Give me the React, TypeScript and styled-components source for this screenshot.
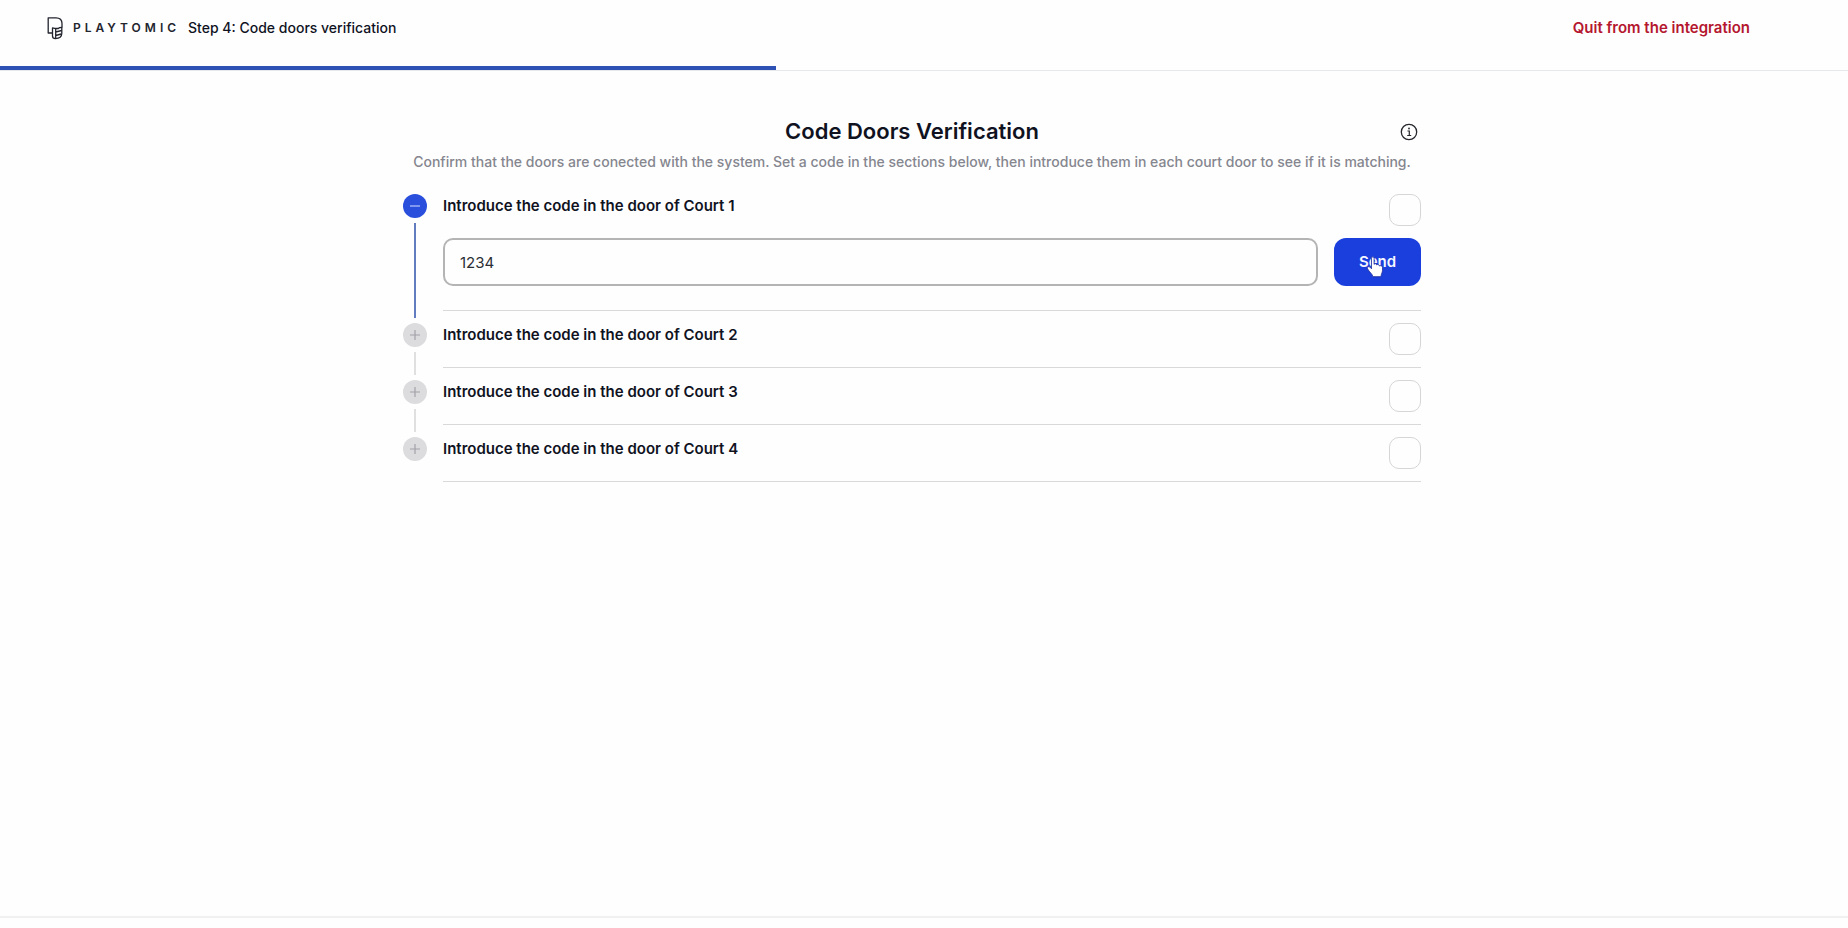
import React, { useState } from "react";
import styled, { createGlobalStyle } from "styled-components";

const GlobalStyle = createGlobalStyle`
  *, *::before, *::after { box-sizing: border-box; }
  body {
    margin: 0;
    background: #fefefe;
    color: #10131f;
    font-family: Inter, "Liberation Sans", sans-serif;
    font-size: 15px;
    line-height: 24px;
  }
`;

const Page = styled.div`
  display: flex;
  flex-direction: column;
  min-height: 100vh;
`;

const Header = styled.header`
  border-bottom: 1px solid #e6e8e9;
`;

const HeaderRow = styled.div`
  display: flex;
  align-items: center;
  height: 66px;
  padding: 0 98px 10px 47px;
`;

const Brand = styled.a`
  display: flex;
  align-items: center;
  gap: 9px;
  color: #23252e;
  text-decoration: none;
`;

const Wordmark = styled.span`
  font-size: 12px;
  font-weight: 600;
  letter-spacing: 4px;
`;

const StepName = styled.span`
  margin-left: 8px;
  font-size: 14px;
  font-weight: 500;
`;

const QuitLink = styled.a`
  margin-left: auto;
  color: #b5172f;
  font-weight: 600;
  text-decoration: none;
`;

const Progress = styled.div`
  height: 4px;
`;

const ProgressFill = styled.div`
  height: 100%;
  background: #2d50b4;
`;

const Main = styled.main`
  flex: 1;
  width: 100%;
  padding: 44px 24px 40px 0;
`;

const Content = styled.div`
  max-width: 1018px;
  margin: 0 auto;
`;

const TitleRow = styled.div`
  display: grid;
  grid-template-columns: 1fr auto 1fr;
  align-items: center;
`;

const Title = styled.h1`
  grid-column: 2;
  margin: 0;
  font-size: 22px;
  font-weight: 600;
  line-height: 32px;
`;

const InfoButton = styled.button`
  display: flex;
  justify-self: end;
  margin-right: 3px;
  padding: 2px 0 0;
  border: 0;
  background: none;
  color: #26282d;
`;

const Subtitle = styled.p`
  margin: 3px 0 20px;
  color: #85868f;
  font-size: 14px;
  font-weight: 500;
  text-align: center;
`;

const Steps = styled.ol`
  margin: 0;
  padding: 0;
  list-style: none;
`;

const Step = styled.li`
  display: flex;
  gap: 16px;
`;

const Rail = styled.div`
  display: flex;
  flex-direction: column;
  align-items: center;
`;

const Toggle = styled.button<{ $open: boolean }>`
  display: flex;
  align-items: center;
  justify-content: center;
  width: 24px;
  height: 24px;
  padding: 0;
  border: 0;
  border-radius: 50%;
  background: ${(p) => (p.$open ? "#2a4fdc" : "#dcdcde")};
  color: ${(p) => (p.$open ? "#b9c8fa" : "#a2a2a8")};
`;

const Connector = styled.div<{ $open: boolean }>`
  flex: 1;
  width: 2px;
  margin: 5px 0;
  background: ${(p) => (p.$open ? "#627cc0" : "#e0e0e1")};
`;

const StepBody = styled.div<{ $open: boolean }>`
  flex: 1;
  margin-bottom: 12px;
  padding-bottom: ${(p) => (p.$open ? 24 : 12)}px;
  border-bottom: 1px solid #d9d9da;
`;

const StepHead = styled.div`
  display: flex;
  align-items: flex-start;
  justify-content: space-between;
`;

const StepLabel = styled.label`
  font-weight: 600;
`;

const Check = styled.input`
  appearance: none;
  width: 32px;
  height: 32px;
  margin: 0;
  border: 1px solid #d6d6d7;
  border-radius: 10px;
  background: #fefefe;
  &:checked { background: #1c43e0; }
`;

const CodeForm = styled.form`
  display: flex;
  gap: 16px;
  margin-top: 12px;
`;

const CodeInput = styled.input`
  flex: 1;
  min-width: 0;
  height: 48px;
  padding: 0 15px;
  border: 2px solid #b4b4b5;
  border-radius: 10px;
  outline: 0;
  background: #fefefe;
  color: #2b2e35;
  font: inherit;
`;

const SendButton = styled.button`
  position: relative;
  width: 87px;
  height: 48px;
  padding: 0;
  border: 0;
  border-radius: 12px;
  background: #1a3fdd;
  color: #f4f6ff;
  font: inherit;
  font-weight: 600;
`;

const Pointer = styled.svg`
  position: absolute;
  top: 18px;
  left: 32px;
  pointer-events: none;
`;

const Footer = styled.footer`
  height: 12px;
  border-top: 2px solid #f0f0f0;
`;

const LogoMark = () => (
  <svg width="17" height="24" viewBox="0 0 17 24" fill="none" stroke="currentColor" strokeWidth="1.3" strokeLinejoin="round" aria-hidden="true">
    <path d="M5.500 17H1.200V1.800H9c4 0 6 2.500 6 5.800v4" />
    <path d="M5.500 12v8c0 1.800 1.200 2.600 3 2.600 4 0 6.300-1.700 6.300-5.300V11.300c-1.700 0-2.800.3-3.600 1.200H8.500C7 12.500 6.300 12 5.500 12Z" />
    <path d="M8.700 12.500v10M8.700 16l6-1.500M8.700 19.500l5.500-1.500" />
  </svg>
);

const InfoIcon = () => (
  <svg width="18" height="18" viewBox="0 0 18 18" fill="none" stroke="currentColor" aria-hidden="true">
    <circle cx="9" cy="9" r="7.700" strokeWidth="1.300" />
    <path d="M7.500 8H9.300V12.500M7.200 12.500H11.200" strokeWidth="1.200" />
    <circle cx="9" cy="5.500" r=".9" fill="currentColor" stroke="none" />
  </svg>
);

const ToggleIcon = ({ open }: { open: boolean }) => (
  <svg width="12" height="12" viewBox="0 0 12 12" stroke="currentColor" strokeWidth="1.200" aria-hidden="true">
    <path d={open ? "M1 6H11" : "M1 6H11M6 1V11"} />
  </svg>
);

const HandPointer = () => (
  <Pointer width="18" height="22" viewBox="0 0 20 25" aria-hidden="true">
    <path
      d="M6 2.500C6 .4 9 .4 9 2.500V9.500C9.500 8.300 12 8.400 12 10.200 12.800 9.200 15 9.600 15 11.300 16 10.600 18.500 10.800 18.500 13V16.500C18.500 19 17 20 16.800 23.500H7.500C7.300 20.500 3.500 18.500 1.500 14.500.6 12.400 3 11.200 4.500 12.800L6 14.500Z"
      fill="#fff"
      stroke="#2432a0"
      strokeWidth="1"
    />
  </Pointer>
);

const courts = [1, 2, 3, 4];

export default function App() {
  const [openCourt, setOpenCourt] = useState(1);
  const [code, setCode] = useState("1234");

  return (
    <Page>
      <GlobalStyle />
      <Header>
        <HeaderRow>
          <Brand href="#">
            <LogoMark />
            <Wordmark>PLAYTOMIC</Wordmark>
          </Brand>
          <StepName>Step 4: Code doors verification</StepName>
          <QuitLink href="#">Quit from the integration</QuitLink>
        </HeaderRow>
        <Progress>
          <ProgressFill style={{ width: "42%" }} />
        </Progress>
      </Header>
      <Main>
        <Content>
          <TitleRow>
            <Title>Code Doors Verification</Title>
            <InfoButton type="button" aria-label="More information">
              <InfoIcon />
            </InfoButton>
          </TitleRow>
          <Subtitle>
            Confirm that the doors are conected with the system. Set a code in the sections below, then introduce them in each court door to see if it is matching.
          </Subtitle>
          <Steps>
            {courts.map((court, index) => {
              const open = court === openCourt;
              return (
                <Step key={court}>
                  <Rail>
                    <Toggle type="button" $open={open} aria-expanded={open} aria-label={`Court ${court}`} onClick={() => setOpenCourt(court)}>
                      <ToggleIcon open={open} />
                    </Toggle>
                    {index < courts.length - 1 && <Connector $open={open} />}
                  </Rail>
                  <StepBody $open={open}>
                    <StepHead>
                      <StepLabel htmlFor={`court-${court}`}>Introduce the code in the door of Court {court}</StepLabel>
                      <Check id={`court-${court}`} type="checkbox" />
                    </StepHead>
                    {open && (
                      <CodeForm onSubmit={(e) => e.preventDefault()}>
                        <CodeInput aria-label={`Code for court ${court}`} value={code} onChange={(e) => setCode(e.target.value)} />
                        <SendButton type="submit">
                          Send
                          <HandPointer />
                        </SendButton>
                      </CodeForm>
                    )}
                  </StepBody>
                </Step>
              );
            })}
          </Steps>
        </Content>
      </Main>
      <Footer />
    </Page>
  );
}
